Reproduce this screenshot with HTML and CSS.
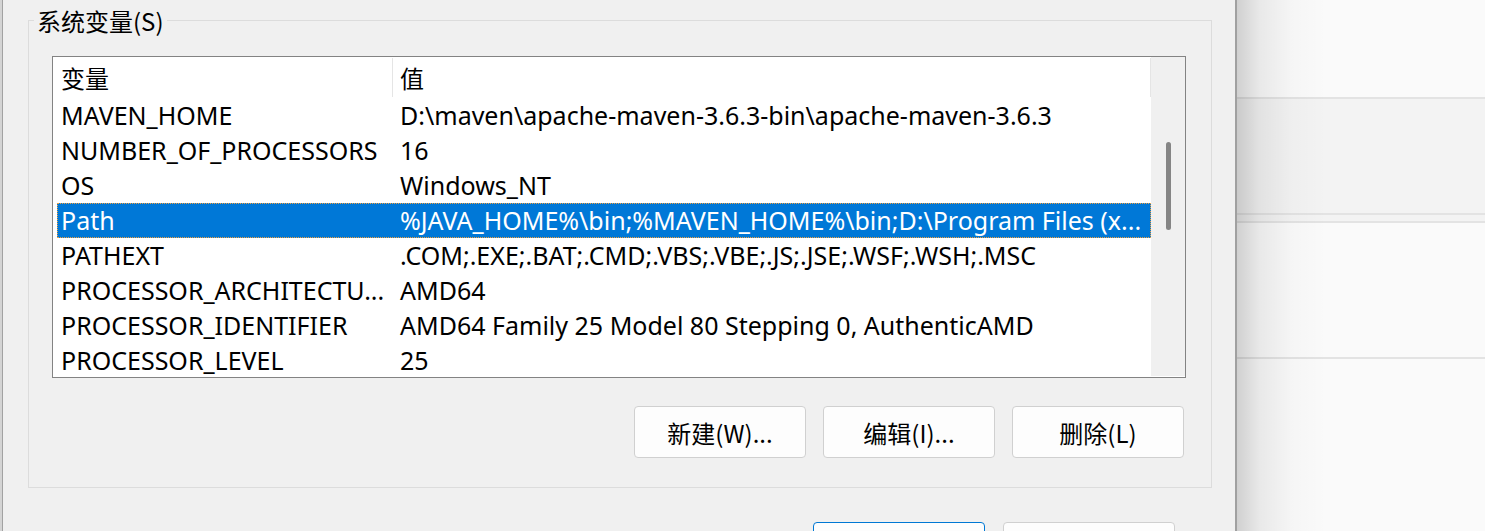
FILE: index.html
```html
<!DOCTYPE html>
<html lang="zh-CN">
<head>
<meta charset="utf-8">
<title>系统变量</title>
<link rel="stylesheet" href="styles.css">
</head>
<body>
<div class="screen">
  <div class="edge"></div>
  <div class="dialog">
    <div class="groupbox">
      <div class="legend">系统变量(S)</div>
      <div class="listbox">
        <div class="list-main">
          <div class="list-header">
            <div class="hcell c1">变量</div>
            <div class="hcell c2">值</div>
          </div>
          <div class="row"><span class="cell c1">MAVEN_HOME</span><span class="cell c2">D:\maven\apache-maven-3.6.3-bin\apache-maven-3.6.3</span></div>
          <div class="row"><span class="cell c1">NUMBER_OF_PROCESSORS</span><span class="cell c2">16</span></div>
          <div class="row"><span class="cell c1">OS</span><span class="cell c2">Windows_NT</span></div>
          <div class="row selected"><span class="cell c1">Path</span><span class="cell c2">%JAVA_HOME%\bin;%MAVEN_HOME%\bin;D:\Program Files (x...</span></div>
          <div class="row"><span class="cell c1">PATHEXT</span><span class="cell c2">.COM;.EXE;.BAT;.CMD;.VBS;.VBE;.JS;.JSE;.WSF;.WSH;.MSC</span></div>
          <div class="row"><span class="cell c1">PROCESSOR_ARCHITECTU...</span><span class="cell c2">AMD64</span></div>
          <div class="row"><span class="cell c1">PROCESSOR_IDENTIFIER</span><span class="cell c2">AMD64 Family 25 Model 80 Stepping 0, AuthenticAMD</span></div>
          <div class="row"><span class="cell c1">PROCESSOR_LEVEL</span><span class="cell c2">25</span></div>
        </div>
        <div class="vscroll"><div class="thumb"></div></div>
      </div>
      <div class="btn-row">
        <button class="btn">新建(W)...</button>
        <button class="btn">编辑(I)...</button>
        <button class="btn">删除(L)</button>
      </div>
    </div>
    <div class="dlg-buttons">
      <button class="btn dlg primary" aria-label="确定"></button>
      <button class="btn dlg" aria-label="取消"></button>
    </div>
  </div>
  <div class="backdrop">
    <div class="pane p1"></div>
    <div class="pane p2"></div>
    <div class="pane p3"></div>
    <div class="pane p4"></div>
    <div class="pane p5"></div>
    <div class="shadow"></div>
  </div>
</div>
</body>
</html>
```

FILE: styles.css
```css
* { box-sizing: border-box; }
html, body {
  margin: 0;
  padding: 0;
  background: #f0f0f0;
}
body {
  font-family: "Noto Sans", "Noto Sans CJK SC", sans-serif;
  font-size: 25px;
  color: #000;
}
.screen {
  display: flex;
  width: 1485px;
  height: 531px;
  overflow: hidden;
}
.edge {
  width: 3px;
  flex: none;
  background: linear-gradient(to right, #d4d4d4 0 2px, #a2a2a2 2px 3px);
}
.dialog {
  width: 1232px;
  flex: none;
  background: #f0f0f0;
  padding: 20px 0 0 25px;
}
.groupbox {
  width: 1184px;
  height: 468px;
  border: 1px solid #dcdcdc;
  padding-left: 23px;
}
.legend {
  width: fit-content;
  margin: -12px 0 0 -18px;
  padding: 0 3px;
  background: #f0f0f0;
  line-height: 24px;
  font-size: 24px;
  font-family: "Noto Sans CJK SC", sans-serif;
}
.listbox {
  margin-top: 23px;
  width: 1134px;
  height: 322px;
  border: 1px solid #838383;
  background: #fff;
  display: flex;
}
.list-main {
  flex: 1;
  overflow: hidden;
}
.list-header {
  height: 41px;
  display: flex;
}
.hcell {
  display: flex;
  align-items: center;
  font-family: "Noto Sans CJK SC", sans-serif;
  font-size: 24px;
  border-right: 1px solid #e5e5e5;
  margin: 1px 0 1px;
}
.hcell.c1 { width: 340px; padding-left: 8px; }
.hcell.c2 { flex: 1; padding-left: 7px; }
.row {
  height: 35px;
  margin-left: 4px;
  display: flex;
  align-items: center;
  white-space: nowrap;
  line-height: 33px;
}
.cell { overflow: hidden; }
.row .c1 { width: 336px; flex: none; padding: 0 4px; }
.row .c2 { flex: 1; padding-left: 7px; }
.row.selected {
  background: #0078d7;
  color: #fff;
  outline: 1px dotted #f0a040;
  outline-offset: -1px;
}
.vscroll {
  width: 34px;
  flex: none;
  background: #f0f0f0;
  padding-top: 85px;
  margin-bottom: 1px;
}
.thumb {
  width: 5px;
  height: 88px;
  margin: 0 auto;
  border-radius: 3px;
  background: #858585;
}
.btn-row {
  width: 1132px;
  margin-top: 28px;
  display: flex;
  justify-content: flex-end;
  gap: 17px;
}
.btn {
  width: 172px;
  height: 52px;
  background: #fdfdfd;
  border: 1px solid #d0d0d0;
  border-radius: 4px;
  font-family: "Noto Sans CJK SC", sans-serif;
  font-size: 24px;
  color: #000;
  padding: 0;
}
.dlg-buttons {
  margin-top: 34px;
  padding-right: 60px;
  display: flex;
  justify-content: flex-end;
  gap: 18px;
}
.btn.dlg {
  flex: none;
}
.btn.primary {
  border-color: #0078d4;
}
.backdrop {
  flex: 1;
  position: relative;
  border-left: 2px solid #a0a0a0;
  background: #fafafa;
}
.pane.p1 { height: 97px; background: #fafafa; }
.pane.p2 { height: 118px; background: #f3f3f3; border-top: 2px solid #e3e3e3; border-bottom: 2px solid #e3e3e3; }
.pane.p3 { height: 6px; background: #f3f3f3; }
.pane.p4 { height: 136px; background: #fafafa; border-top: 2px solid #e3e3e3; }
.pane.p5 { height: 174px; background: #fafafa; border-top: 2px solid #e3e3e3; }
.shadow {
  position: absolute;
  left: 0;
  top: 0;
  bottom: 0;
  width: 90px;
  background: linear-gradient(to right, rgba(0,0,0,0.17), rgba(0,0,0,0.07) 25%, rgba(0,0,0,0.02) 60%, rgba(0,0,0,0));
}
```
